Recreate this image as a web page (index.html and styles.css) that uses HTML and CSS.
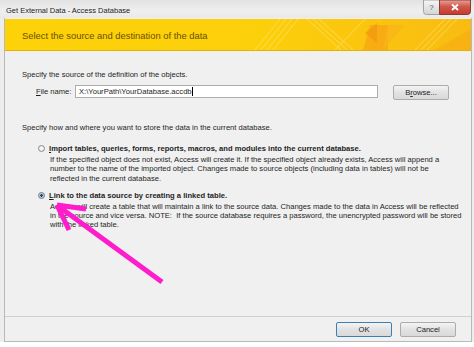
FILE: index.html
```html
<!DOCTYPE html>
<html lang="en">

<head>
    <meta charset="UTF-8">
    <title>Get External Data - Access Database</title>
    <link rel="stylesheet" href="styles.css">
</head>

<body>
    <div class="window">
        <div class="titlebar">
            <span class="title">Get External Data - Access Database</span>
            <svg class="caption-buttons" width="48" height="15" viewBox="0 0 48 15">
                <defs>
                    <linearGradient id="helpGrad" x1="0" x2="0" y1="0" y2="1">
                        <stop offset="0" stop-color="#f6f6f6"/>
                        <stop offset="1" stop-color="#d4d4d4"/>
                    </linearGradient>
                    <linearGradient id="closeGrad" x1="0" x2="0" y1="0" y2="1">
                        <stop offset="0" stop-color="#e6a59a"/>
                        <stop offset="0.45" stop-color="#d0584a"/>
                        <stop offset="1" stop-color="#c23b2e"/>
                    </linearGradient>
                </defs>
                <path d="M0.5,0 V11.5 Q0.5,14.5 3.5,14.5 H16.5 V0 Z" fill="url(#helpGrad)" stroke="#a2a2a2"/>
                <text x="8.5" y="10" font-size="8" text-anchor="middle" fill="#5a5a5a" font-family="Liberation Sans, Arial, sans-serif">?</text>
                <path d="M16.5,0 V14.5 H44.5 Q47.5,14.5 47.5,11.5 V0 Z" fill="url(#closeGrad)" stroke="#8d3a31"/>
                <path d="M29,4.5 L35,10 M35,4.5 L29,10" stroke="#fff" stroke-width="1.8"/>
            </svg>
        </div>

        <div class="frame">
            <div class="banner">
                <svg class="banner-art" width="466" height="31" viewBox="0 0 466 31">
                    <defs>
                        <linearGradient id="bg" x1="0" x2="1" y1="0" y2="0">
                            <stop offset="0" stop-color="#fdd208"/>
                            <stop offset="0.55" stop-color="#fccf0b"/>
                            <stop offset="1" stop-color="#f9bb12"/>
                        </linearGradient>
                    </defs>
                    <rect width="466" height="31" fill="url(#bg)"/>
                    <g stroke="#fde46a" stroke-width="1" opacity="0.7">
                        <line x1="250" y1="31" x2="275" y2="0"/>
                        <line x1="256" y1="31" x2="281" y2="0"/>
                        <line x1="262" y1="31" x2="287" y2="0"/>
                        <line x1="268" y1="31" x2="293" y2="0"/>
                        <line x1="302" y1="0" x2="336" y2="31"/>
                        <line x1="308" y1="0" x2="342" y2="31"/>
                        <line x1="314" y1="0" x2="348" y2="31"/>
                        <line x1="330" y1="31" x2="360" y2="0"/>
                        <line x1="410" y1="31" x2="440" y2="0"/>
                        <line x1="416" y1="31" x2="446" y2="0"/>
                        <line x1="422" y1="31" x2="452" y2="0"/>
                    </g>
                    <polygon points="365,6 383,6 383,31 358,31" fill="#f7a814" opacity="0.85"/>
                    <polygon points="360,14 372,4 372,24" fill="#f49a10" opacity="0.8"/>
                    <polygon points="383,6 400,6 378,31" fill="#f9b516" opacity="0.8"/>
                    <polygon points="430,31 466,10 466,31" fill="#f8ae12" opacity="0.7"/>
                </svg>
                <span class="banner-text">Select the source and destination of the data</span>
            </div>

            <div class="content">
                <p class="lead">Specify the source of the definition of the objects.</p>

                <div class="file-row">
                    <label class="file-label"><u>F</u>ile name:</label>
                    <div class="file-input">X:\YourPath\YourDatabase.accdb<span class="caret"></span></div>
                    <span class="btn browse">B<u>r</u>owse...</span>
                </div>

                <p class="lead second">Specify how and where you want to store the data in the current database.</p>

                <div class="option">
                    <div class="option-head">
                        <span class="radio"></span>
                        <span class="option-title"><u>I</u>mport tables, queries, forms, reports, macros, and modules into the current database.</span>
                    </div>
                    <p class="option-desc">If the specified object does not exist, Access will create it. If the specified object already exists, Access will append a<br>number to the name of the imported object. Changes made to source objects (including data in tables) will not be<br>reflected in the current database.</p>
                </div>

                <div class="option">
                    <div class="option-head">
                        <span class="radio checked"></span>
                        <span class="option-title"><u>L</u>ink to the data source by creating a linked table.</span>
                    </div>
                    <p class="option-desc">Access will create a table that will maintain a link to the source data. Changes made to the data in Access will be reflected<br>in the source and vice versa. NOTE:&nbsp; If the source database requires a password, the unencrypted password will be stored<br>with the linked table.</p>
                </div>
            </div>

            <div class="footer">
                <span class="btn ok">OK</span>
                <span class="btn">Cancel</span>
            </div>
        </div>
    </div>

    <svg class="annotation" width="474" height="347" viewBox="0 0 474 347">
        <g stroke="#ff1ccc" stroke-width="5" stroke-linecap="butt" fill="none">
            <line x1="162" y1="282" x2="58" y2="206"/>
            <line x1="57" y1="205" x2="69" y2="230"/>
            <line x1="57" y1="205" x2="86" y2="209"/>
        </g>
    </svg>
</body>

</html>
```

FILE: styles.css
```css
body, html {
    margin: 0;
    padding: 0;
    width: 474px;
    height: 347px;
    overflow: hidden;
    background: #fff;
    font-family: 'Liberation Sans', Arial, sans-serif;
    color: #1e1e1e;
}

.window {
    height: 342px;
    background: #ededed;
    display: flex;
    flex-direction: column;
}

.titlebar {
    height: 18px;
    display: flex;
    justify-content: space-between;
    align-items: flex-start;
    background: linear-gradient(#e2e2e2, #efefef 60%, #e9e9e9);
}

.title {
    font-size: 7.5px;
    padding: 6px 0 0 6px;
    color: #222;
}

.caption-buttons {
    display: block;
    margin-right: 3px;
}

.frame {
    flex: 1;
    margin: 0 2px 0 4px;
    border: 1px solid #b9b9b9;
    border-top: none;
    display: flex;
    flex-direction: column;
    background: #f0f0f0;
}

.banner {
    position: relative;
    height: 31px;
    margin-top: 1px;
    display: flex;
    align-items: center;
    border-bottom: 1px solid #e6b100;
}

.banner-art {
    position: absolute;
    top: 0;
    left: 0;
}

.banner-text {
    position: relative;
    padding-left: 17px;
    padding-top: 1px;
    font-size: 9.4px;
    color: #6a5000;
}

.content {
    flex: 1;
    padding: 0 0 0 17px;
}

.lead {
    margin: 19px 0 0;
    font-size: 7.6px;
    line-height: 9px;
}

.lead.second {
    margin-top: 23px;
}

.file-row {
    display: flex;
    align-items: center;
    margin-top: 4px;
    font-size: 7.6px;
}

.file-label {
    width: 39px;
    padding-left: 14px;
}

.file-input {
    width: 303px;
    height: 13px;
    box-sizing: border-box;
    border: 1px solid #abadb3;
    background: #fff;
    padding: 0 0 0 3px;
    display: flex;
    align-items: center;
    font-size: 7.6px;
}

.caret {
    width: 1px;
    height: 9px;
    background: #000;
}

.btn {
    width: 56px;
    height: 15px;
    box-sizing: border-box;
    border: 1px solid #acacac;
    border-radius: 2px;
    background: linear-gradient(#f4f4f4, #e2e2e2 50%, #d9d9d9);
    display: flex;
    align-items: center;
    justify-content: center;
    font-size: 7.6px;
    color: #222;
}

.browse {
    margin-left: 15px;
    margin-top: 2px;
}

.option {
    margin-top: 12px;
}

.option + .option {
    margin-top: 8px;
}

.option-head {
    display: flex;
    align-items: center;
    padding-left: 16px;
}

.radio {
    width: 7px;
    height: 7px;
    box-sizing: border-box;
    border: 1px solid #8c8c8c;
    border-radius: 50%;
    background: radial-gradient(#ffffff, #dcdcdc);
    margin-right: 4px;
}

.radio.checked {
    background: radial-gradient(#2c3e50 35%, #9fb3c6 40%, #e6eef5);
    border-color: #6e7f8f;
}

.option-title {
    font-size: 7.6px;
    font-weight: bold;
}

.option-desc {
    margin: 2px 0 0 28px;
    font-size: 7.6px;
    line-height: 9.3px;
}

.footer {
    height: 24px;
    border-top: 1px solid #d0d0d0;
    display: flex;
    justify-content: flex-end;
    align-items: center;
    gap: 8px;
    padding-right: 15px;
}

.btn.ok {
    border-color: #3c7fb1;
}

.annotation {
    position: absolute;
    top: 0;
    left: 0;
    pointer-events: none;
}
```
